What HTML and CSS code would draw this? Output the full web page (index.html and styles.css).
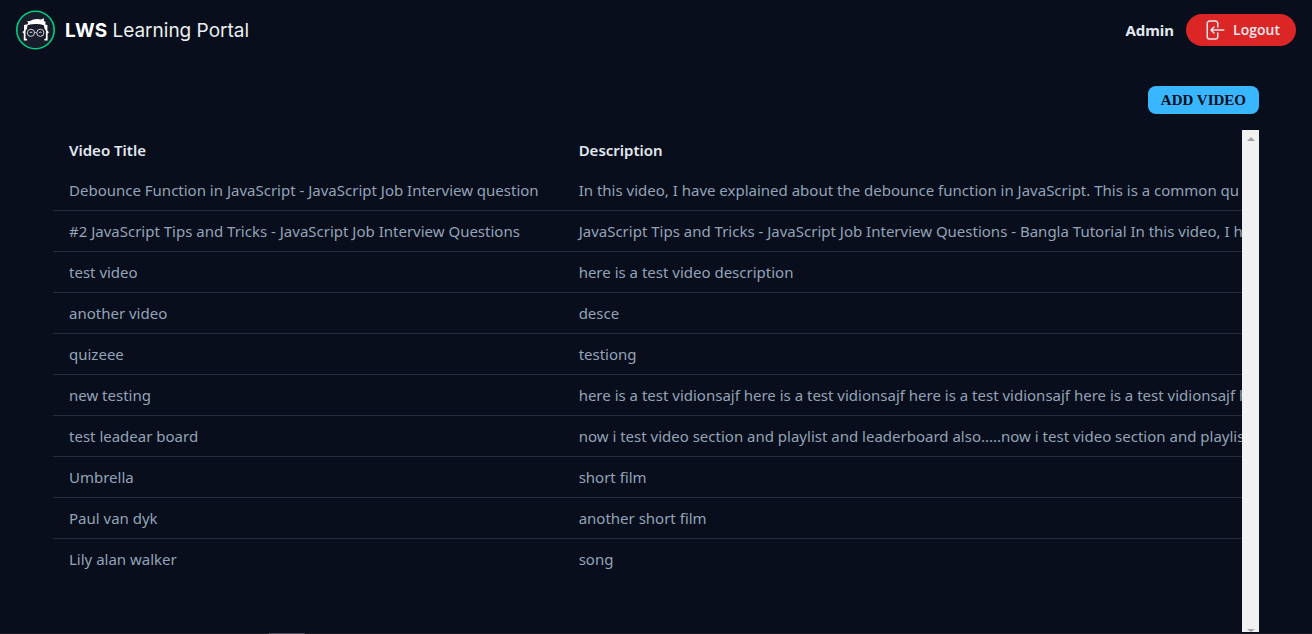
FILE: index.html
```html
<!DOCTYPE html>
<html lang="en">
<head>
<meta charset="utf-8">
<meta name="viewport" content="width=device-width, initial-scale=1">
<title>LWS Learning Portal</title>
<link rel="stylesheet" href="styles.css">
</head>
<body>
<header class="nav">
  <a class="brand" href="#">
    <svg class="brand-mark" viewBox="0 0 40 40" aria-hidden="true">
      <circle cx="19.5" cy="20" r="18.7" fill="#171d2b" stroke="#00cf83" stroke-width="1.6"/>
      <path d="M11 15.6 L12.2 12.8 L10.9 11.2 Q14 11.6 16 10 Q20 8.6 25 9.4 L28 8.2 L27.8 11 L29.6 11.8 L29 16.6 Q27.5 13.8 20 14 Q13.5 13.8 11 15.6Z" fill="#fff"/>
      <path d="M11.6 14.2 L8 15V20.6L6.4 22.2L7.8 23.6V30.6H11V28.8H9.5V20.8L11 18.6ZM27.8 14.2 L31.4 15V20.6L33 22.2L31.6 23.6V30.6H28.4V28.8H29.9V20.8L28.4 18.6Z" fill="#fff"/>
      <g fill="none" stroke="#e4e6e9" stroke-width=".9"><circle cx="14.9" cy="22.8" r="3.6"/><circle cx="24.3" cy="22.8" r="3.6"/><path d="M18.5 23Q19.6 22 20.7 23M14 23a1 1 0 0 1 2 0M23.4 23a1 1 0 0 1 2 0"/></g>
    </svg>
    <span class="brand-name"><strong>LWS</strong> Learning Portal</span>
  </a>
  <div class="account">
    <span class="role">Admin</span>
    <button class="logout" type="button">
      <svg class="logout-icon" viewBox="0 0 24 24" aria-hidden="true"><path d="M15.75 9V5.25A2.25 2.25 0 0 0 13.5 3h-6a2.25 2.25 0 0 0-2.25 2.25v13.5A2.25 2.25 0 0 0 7.5 21h6a2.25 2.25 0 0 0 2.25-2.25V15M12 9l-3 3m0 0l3 3m-3-3h12.75"/></svg>
      Logout
    </button>
  </div>
</header>
<main class="content">
  <div class="actions"><button class="add" type="button">ADD VIDEO</button></div>
  <div class="panel">
    <div class="viewport">
      <table class="videos">
        <thead><tr><th scope="col">Video Title</th><th scope="col">Description</th></tr></thead>
        <tbody>
          <tr><td>Debounce Function in JavaScript - JavaScript Job Interview question</td><td>In this video, I have explained about the debounce function in JavaScript. This is a common qu</td></tr>
          <tr><td>#2 JavaScript Tips and Tricks - JavaScript Job Interview Questions</td><td>JavaScript Tips and Tricks - JavaScript Job Interview Questions - Bangla Tutorial In this video, I h</td></tr>
          <tr><td>test video</td><td>here is a test video description</td></tr>
          <tr><td>another video</td><td>desce</td></tr>
          <tr><td>quizeee</td><td>testiong</td></tr>
          <tr><td>new testing</td><td>here is a test vidionsajf here is a test vidionsajf here is a test vidionsajf here is a test vidionsajf h</td></tr>
          <tr><td>test leadear board</td><td>now i test video section and playlist and leaderboard also.....now i test video section and playlis</td></tr>
          <tr><td>Umbrella</td><td>short film</td></tr>
          <tr><td>Paul van dyk</td><td>another short film</td></tr>
          <tr><td>Lily alan walker</td><td>song</td></tr>
        </tbody>
      </table>
    </div>
    <div class="track" aria-hidden="true"><span class="arrow arrow-up"></span><span class="arrow arrow-down"></span></div>
  </div>
</main>
<div class="edge" aria-hidden="true"><span class="edge-tab"></span></div>
</body>
</html>
```
FILE: styles.css
```css
* { box-sizing: border-box; }

body {
  margin: 0;
  height: 100vh;
  display: flex;
  flex-direction: column;
  overflow: hidden;
  background: #080e1b;
  color: #e2e8f0;
  font: 15px/24px "Segoe UI", "Noto Sans", sans-serif;
}

button { border: 0; cursor: pointer; }

.nav {
  display: flex;
  align-items: center;
  justify-content: space-between;
  height: 62px;
  padding: 0 16px 2px;
  border-bottom: 1px solid #0a0d18;
}

.brand {
  display: flex;
  align-items: center;
  gap: 9px;
  color: #fff;
  text-decoration: none;
}

.brand-mark { width: 40px; height: 40px; }

.brand-name {
  padding-top: 2px;
  font: 400 19px/24px Inter, sans-serif;
  color: #eceef0;
}

.brand-name strong { font-weight: 700; color: #fff; }

.account {
  display: flex;
  align-items: center;
  gap: 12px;
}

.role { font-weight: 700; }

.logout {
  display: flex;
  align-items: center;
  gap: 7px;
  height: 32px;
  padding: 0 16px;
  border-radius: 16px;
  background: #dc2626;
  color: #e2e8f0;
  font: 600 14px/20px "Segoe UI", "Open Sans", "Noto Sans", sans-serif;
}

.logout-icon {
  width: 24px;
  height: 24px;
  fill: none;
  stroke: currentColor;
  stroke-width: 1.5;
  stroke-linecap: round;
  stroke-linejoin: round;
}

.content {
  flex: 1;
  min-height: 0;
  display: flex;
  flex-direction: column;
  gap: 16px;
  padding: 24px 53px 1px;
}

.actions { display: flex; justify-content: flex-end; }

.add {
  height: 28px;
  padding: 0 13px;
  border-radius: 8px;
  background: #38b6ff;
  color: #080e1b;
  font: 700 15px/24px "Liberation Serif", serif;
}

.panel {
  flex: 1;
  min-height: 0;
  display: flex;
}

.viewport { flex: 1; min-width: 0; overflow: hidden; }

.videos {
  min-width: 100%;
  border-collapse: collapse;
  white-space: nowrap;
  text-align: left;
}

.videos th,
.videos td { padding: 8px 0 8px 16px; }

.videos th { font-weight: 600; }

.videos td { color: #94a3b8; }

.videos td:first-child { padding-right: 24px; }

.videos tbody tr { border-bottom: 1px solid #232b3a; }

.videos tbody tr:last-child { border-bottom: 0; }

.track {
  display: flex;
  flex-direction: column;
  align-items: center;
  justify-content: space-between;
  width: 17px;
  padding-top: 7px;
  overflow: hidden;
  background: #f1f1f1;
}

.arrow {
  border: 4px solid transparent;
  border-top-width: 0;
  border-bottom: 4px solid #a3a3a3;
}

.arrow-down {
  border-top: 3px solid #a3a3a3;
  border-bottom: 0;
}

.edge { height: 1px; padding-left: 269px; background: #201b25; }

.edge-tab { display: block; width: 36px; height: 1px; background: #51495a; }
```
